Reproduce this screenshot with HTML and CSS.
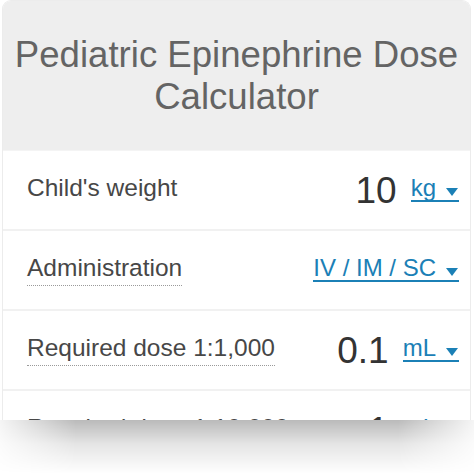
FILE: index.html
```html
<!DOCTYPE html>
<html>
<head>
<meta charset="utf-8">
<link rel="stylesheet" href="styles.css">
</head>
<body>
<div class="card">
  <div class="header">
    <h1 class="title">Pediatric Epinephrine Dose Calculator</h1>
  </div>
  <div class="row">
    <span class="label">Child's weight</span>
    <div class="field">
      <span class="value">10</span>
      <a class="unit">kg<span class="caret"></span></a>
    </div>
  </div>
  <div class="row">
    <span class="label dotted">Administration</span>
    <div class="field">
      <a class="unit">IV / IM / SC<span class="caret"></span></a>
    </div>
  </div>
  <div class="row">
    <span class="label dotted">Required dose 1:1,000</span>
    <div class="field">
      <span class="value">0.1</span>
      <a class="unit">mL<span class="caret"></span></a>
    </div>
  </div>
  <div class="row">
    <span class="label dotted">Required dose 1:10,000</span>
    <div class="field">
      <span class="value">1</span>
      <a class="unit">mL<span class="caret"></span></a>
    </div>
  </div>
</div>
<div class="fade"></div>
</body>
</html>
```
FILE: styles.css
```css
html, body {
  margin: 0;
  padding: 0;
  background: #ffffff;
  width: 474px;
  height: 474px;
  overflow: hidden;
  font-family: "Liberation Sans", Arial, sans-serif;
}

.card {
  margin: 0 3px 0 2px;
  border: 1px solid #ececec;
  border-bottom: none;
  border-radius: 9px 9px 0 0;
  background: #ffffff;
  overflow: hidden;
}

.header {
  background: #eeeeee;
  padding: 33px 8px 32px;
  height: 84px;
  border-bottom: 1px solid #f4f4f4;
}

.title {
  margin: 0;
  font-weight: normal;
  font-size: 36.6px;
  line-height: 42px;
  color: #646464;
  text-align: center;
}

.row {
  box-sizing: border-box;
  display: flex;
  align-items: center;
  justify-content: space-between;
  height: 80px;
  padding: 0 11px 3px 24px;
  border-bottom: 2px solid #f1f1f1;
}

.label {
  font-size: 24.5px;
  color: #474747;
  line-height: 1;
}

.label.dotted {
  padding-bottom: 4px;
  border-bottom: 1px dotted #9a9a9a;
  margin-top: 5px;
}

.field {
  display: flex;
  align-items: center;
  gap: 14px;
}

.value {
  font-size: 37px;
  color: #333333;
  line-height: 1;
  margin-top: 3px;
}

.unit {
  display: inline-flex;
  align-items: baseline;
  font-size: 24px;
  line-height: 1;
  color: #1b80b6;
  border-bottom: 2px solid #1b80b6;
  cursor: pointer;
}

.caret {
  display: inline-block;
  width: 0;
  height: 0;
  margin-left: 10px;
  margin-right: 1px;
  margin-bottom: 1px;
  border-left: 6px solid transparent;
  border-right: 6px solid transparent;
  border-top: 8px solid #1b80b6;
}

.fade {
  position: absolute;
  left: 0;
  top: 420px;
  width: 474px;
  height: 54px;
  background: #ffffff;
}

.fade::before {
  content: "";
  position: absolute;
  inset: 0;
  background: linear-gradient(to bottom, rgba(0,0,0,0.27), rgba(0,0,0,0.1) 45%, rgba(0,0,0,0));
  -webkit-mask-image: linear-gradient(to right, rgba(0,0,0,0.15), #000 16%, #000 84%, rgba(0,0,0,0.15));
  mask-image: linear-gradient(to right, rgba(0,0,0,0.15), #000 16%, #000 84%, rgba(0,0,0,0.15));
}
```
